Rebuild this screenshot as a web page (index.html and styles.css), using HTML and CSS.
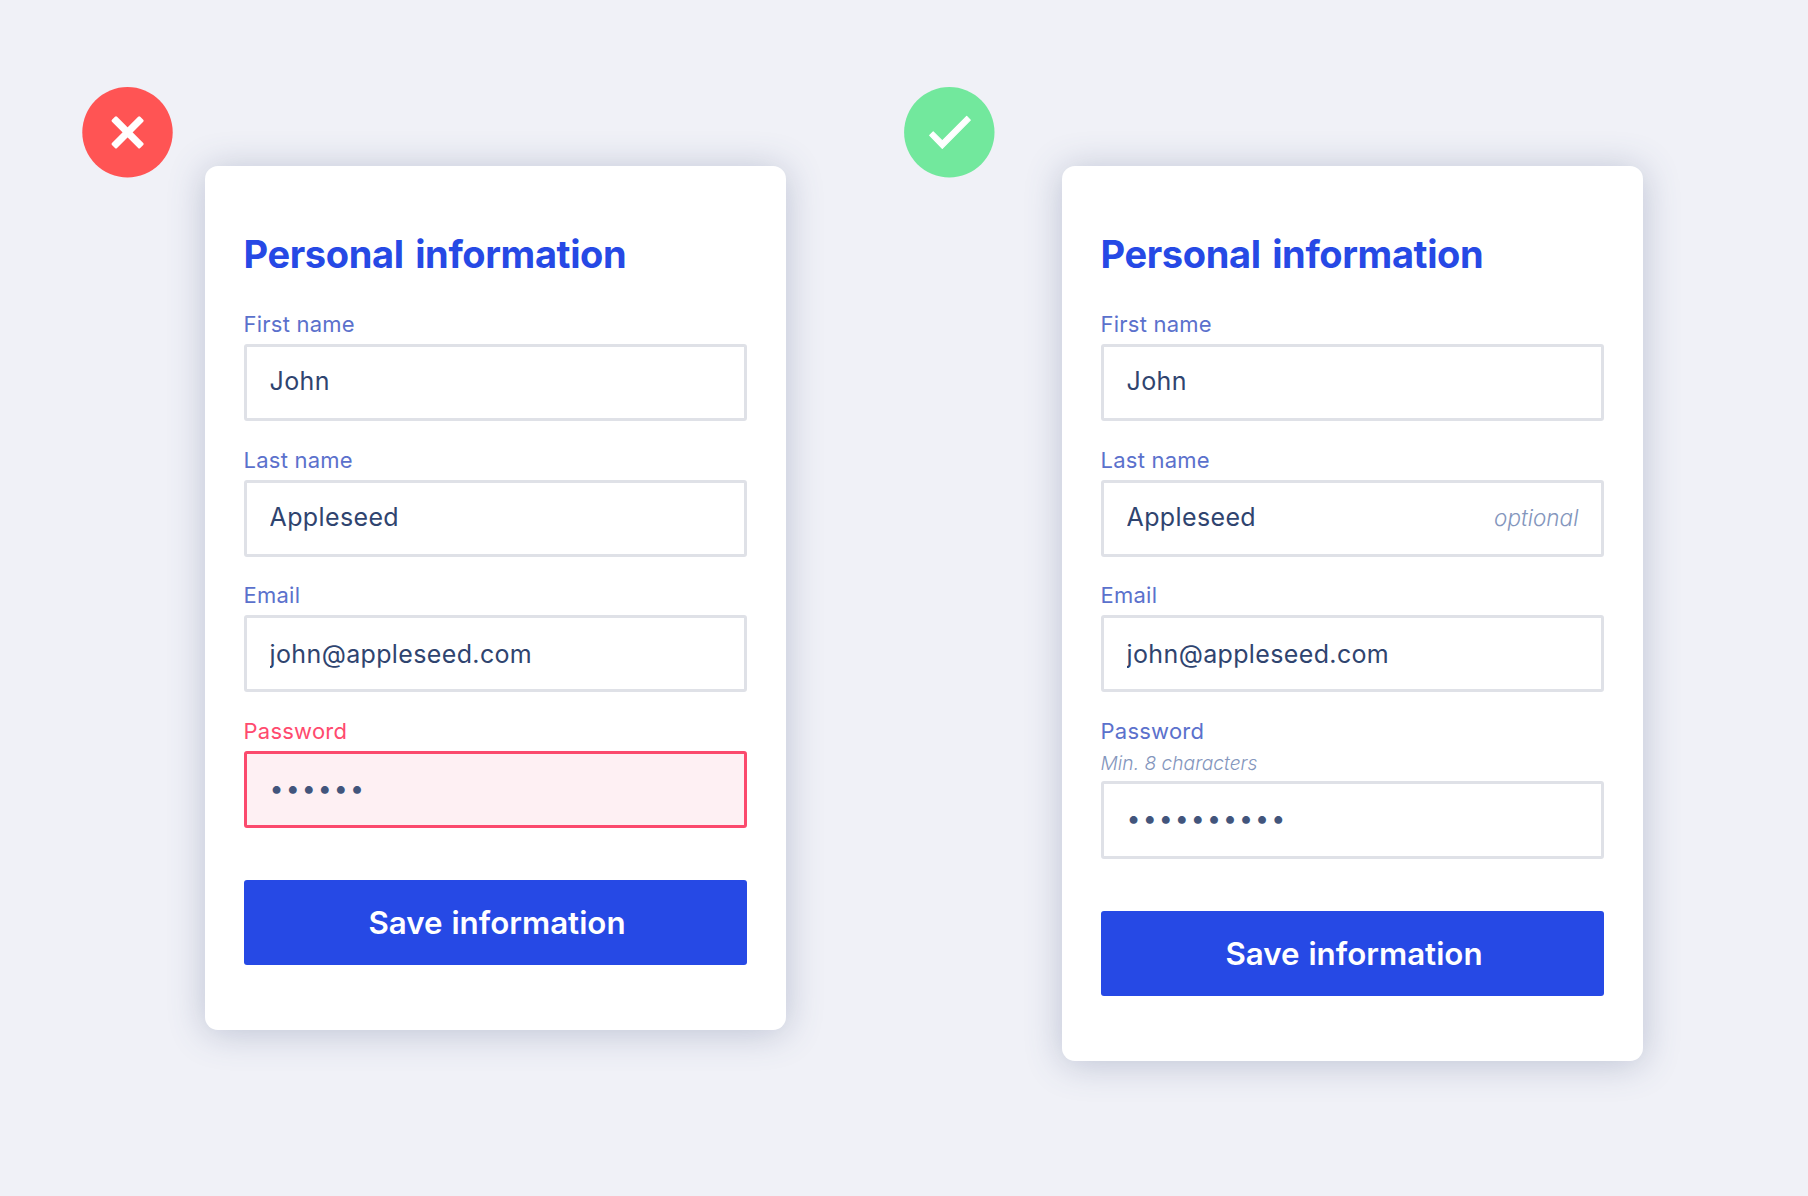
FILE: index.html
```html
<!DOCTYPE html>
<html lang="en">
<head>
  <meta charset="UTF-8">
  <meta name="viewport" content="width=device-width, initial-scale=1.0">
  <title>Personal information</title>
  <link rel="stylesheet" href="styles.css">
</head>
<body>
  <main class="comparison">
    <section class="example example-bad">
      <svg class="badge" viewBox="0 0 91 91" aria-hidden="true">
        <circle cx="45.5" cy="45.3" r="45.2" fill="#ff5454"/>
        <g fill="#fff" transform="translate(45.6 45.4) rotate(45)">
          <rect x="-20" y="-3.6" width="40" height="7.2" rx="1.5"/>
          <rect x="-3.6" y="-20" width="7.2" height="40" rx="1.5"/>
        </g>
      </svg>
      <form class="card">
        <h2>Personal information</h2>
        <div class="field">
          <label for="first-1">First name</label>
          <input class="name" type="text" id="first-1" value="John">
        </div>
        <div class="field">
          <label for="last-1">Last name</label>
          <input class="name" type="text" id="last-1" value="Appleseed">
        </div>
        <div class="field">
          <label for="email-1">Email</label>
          <input type="text" id="email-1" value="john@appleseed.com">
        </div>
        <div class="field error">
          <label for="password-1">Password</label>
          <input class="password" type="password" id="password-1" value="123456">
        </div>
        <button type="button" class="save-btn">Save information</button>
      </form>
    </section>

    <section class="example example-good">
      <svg class="badge" viewBox="0 0 91 91" aria-hidden="true">
        <circle cx="45.3" cy="45.3" r="45.2" fill="#72e89d"/>
        <path d="M38.3 61.3L25.7 48.3L29.2 44.8L38.3 53.9L62.7 29.5L66.3 33.1Z" fill="#fff" stroke="#fff" stroke-width="1.2" stroke-linejoin="round"/>
      </svg>
      <form class="card">
        <h2>Personal information</h2>
        <div class="field">
          <label for="first-2">First name</label>
          <input class="name" type="text" id="first-2" value="John">
        </div>
        <div class="field">
          <label for="last-2">Last name</label>
          <div class="input-wrap">
            <input class="name" type="text" id="last-2" value="Appleseed">
            <span class="optional">optional</span>
          </div>
        </div>
        <div class="field">
          <label for="email-2">Email</label>
          <input type="text" id="email-2" value="john@appleseed.com">
        </div>
        <div class="field">
          <label for="password-2">Password</label>
          <p class="hint">Min. 8 characters</p>
          <input class="password" type="password" id="password-2" value="1234567890">
        </div>
        <button type="button" class="save-btn">Save information</button>
      </form>
    </section>
  </main>
</body>
</html>
```

FILE: styles.css
```css
* {
  margin: 0;
  padding: 0;
  box-sizing: border-box;
}

body {
  font-family: Inter, sans-serif;
  background: #f0f1f7;
  min-height: 100vh;
}

.comparison {
  display: grid;
  grid-template-columns: 822px 1fr;
  padding: 87px 0 0 82px;
}

.example {
  display: flex;
  align-items: flex-start;
  gap: 32px;
}

.example-good {
  gap: 67px;
}

.badge {
  width: 91px;
  height: 91px;
  flex-shrink: 0;
}

.card {
  width: 581px;
  margin-top: 79px;
  padding: 65px 38.6px 64.7px;
  background: #fff;
  border-radius: 13px;
  box-shadow: 0 3px 36px rgba(70, 85, 130, 0.3);
}

h2 {
  margin-bottom: 33px;
  font-size: 38px;
  line-height: 46px;
  font-weight: 700;
  letter-spacing: -0.38px;
  word-spacing: 3px;
  color: #2649e5;
}

.field {
  margin-bottom: 24.4px;
}

label {
  display: block;
  margin-bottom: 6px;
  font-size: 22px;
  line-height: 28px;
  letter-spacing: 0.22px;
  color: #5b71cc;
}

input {
  display: block;
  width: 100%;
  height: 77.2px;
  padding: 0 23px;
  border: 3px solid #dfe1e7;
  border-radius: 3px;
  background: #fff;
  font-family: inherit;
  font-size: 25px;
  letter-spacing: 0.36px;
  color: #2f446f;
  outline: none;
}

input.name {
  padding-bottom: 3px;
}

input.password {
  letter-spacing: 2px;
  padding-bottom: 3px;
  color: #42557c;
}

.input-wrap {
  position: relative;
}

.optional {
  position: absolute;
  top: 24px;
  right: 26px;
  font-size: 22.5px;
  line-height: 28px;
  font-weight: 300;
  font-style: italic;
  color: #8496bd;
}

.hint {
  margin-bottom: 6px;
  font-size: 19.2px;
  line-height: 24.6px;
  font-weight: 300;
  font-style: italic;
  color: #8496bd;
}

.error label {
  color: #ff4a6e;
}

.error input {
  border-color: #fb4a6d;
  background: #fef0f3;
}

.save-btn {
  display: block;
  width: 100%;
  height: 85.3px;
  margin-top: 52px;
  padding: 1px 0 0 3px;
  border: none;
  border-radius: 3px;
  background: #2649e5;
  color: #fff;
  font-family: inherit;
  font-size: 31.3px;
  font-weight: 600;
  word-spacing: 1px;
  cursor: pointer;
}
```
